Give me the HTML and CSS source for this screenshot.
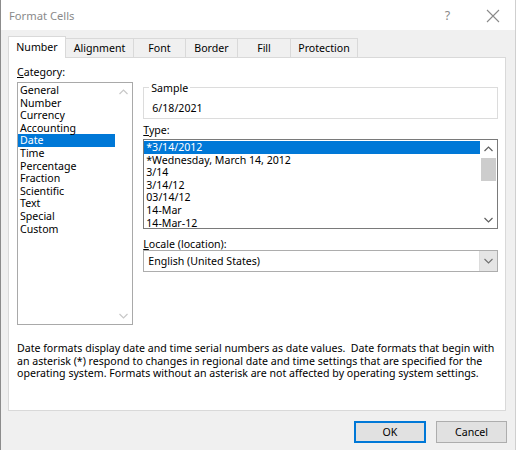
FILE: index.html
```html
<!DOCTYPE html>
<html>
<head>
<meta charset="utf-8">
<link rel="stylesheet" href="styles.css">
</head>
<body>
<div class="window">
  <div class="titlebar">
    <span class="title">Format Cells</span>
    <span class="tb-btn help">?</span>
    <span class="tb-btn close">
      <svg width="14" height="14" viewBox="0 0 14 14"><path d="M1 1L13 13M13 1L1 13" stroke="#8a8a8a" stroke-width="1.1" fill="none"/></svg>
    </span>
  </div>
  <div class="body">
    <div class="tabs">
      <div class="tab active">Number</div>
      <div class="tab">Alignment</div>
      <div class="tab">Font</div>
      <div class="tab">Border</div>
      <div class="tab">Fill</div>
      <div class="tab">Protection</div>
    </div>
    <div class="panel">
      <div class="columns">
        <div class="col-left">
          <div class="label"><u>C</u>ategory:</div>
          <div class="listbox cat">
            <div class="items">
              <div class="item">General</div>
              <div class="item">Number</div>
              <div class="item">Currency</div>
              <div class="item">Accounting</div>
              <div class="item sel">Date</div>
              <div class="item">Time</div>
              <div class="item">Percentage</div>
              <div class="item">Fraction</div>
              <div class="item">Scientific</div>
              <div class="item">Text</div>
              <div class="item">Special</div>
              <div class="item">Custom</div>
            </div>
            <div class="vscroll disabled">
              <svg class="arr" width="9" height="6" viewBox="0 0 9 6"><path d="M0.5 5L4.5 1L8.5 5" stroke="#c8c8c8" stroke-width="1.2" fill="none"/></svg>
              <div class="track"></div>
              <svg class="arr" width="9" height="6" viewBox="0 0 9 6"><path d="M0.5 1L4.5 5L8.5 1" stroke="#c8c8c8" stroke-width="1.2" fill="none"/></svg>
            </div>
          </div>
        </div>
        <div class="col-right">
          <div class="group">
            <div class="legend">Sample</div>
            <div class="sample">6/18/2021</div>
          </div>
          <div class="label type-label"><u>T</u>ype:</div>
          <div class="listbox type">
            <div class="items">
              <div class="item sel">*3/14/2012</div>
              <div class="item">*Wednesday, March 14, 2012</div>
              <div class="item">3/14</div>
              <div class="item">3/14/12</div>
              <div class="item">03/14/12</div>
              <div class="item">14-Mar</div>
              <div class="item">14-Mar-12</div>
            </div>
            <div class="vscroll">
              <svg class="arr" width="9" height="6" viewBox="0 0 9 6"><path d="M0.5 5L4.5 1L8.5 5" stroke="#606060" stroke-width="1.2" fill="none"/></svg>
              <div class="track"><div class="thumb"></div></div>
              <svg class="arr" width="9" height="6" viewBox="0 0 9 6"><path d="M0.5 1L4.5 5L8.5 1" stroke="#606060" stroke-width="1.2" fill="none"/></svg>
            </div>
          </div>
          <div class="label locale-label"><u>L</u>ocale (location):</div>
          <div class="combo">
            <div class="combo-text">English (United States)</div>
            <div class="combo-btn">
              <svg width="9" height="6" viewBox="0 0 9 6"><path d="M0.5 1L4.5 5L8.5 1" stroke="#707070" stroke-width="1.1" fill="none"/></svg>
            </div>
          </div>
        </div>
      </div>
      <p class="desc">Date formats display date and time serial numbers as date values.&nbsp; Date formats that begin with an asterisk (*) respond to changes in regional date and time settings that are specified for the operating system. Formats without an asterisk are not affected by operating system settings.</p>
    </div>
    <div class="buttons">
      <div class="btn default">OK</div>
      <div class="btn cancel">Cancel</div>
    </div>
  </div>
</div>
</body>
</html>
```

FILE: styles.css
```css
html, body {
  margin: 0;
  padding: 0;
}
body {
  width: 516px;
  height: 450px;
  overflow: hidden;
  font-family: "Noto Sans", "Open Sans", sans-serif;
  font-size: 10.6px;
  color: #000;
  background: #f0f0f0;
}
.window {
  width: 516px;
  height: 450px;
  box-sizing: border-box;
  border-left: 1px solid #8c8c8c;
  border-right: 1px solid #cfcfcf;
  background: #f0f0f0;
}
.titlebar {
  height: 30px;
  background: #fff;
  display: flex;
  align-items: center;
  padding-left: 8px;
}
.title {
  color: #8a8a8a;
  font-size: 11.2px;
  flex: 1;
}
.tb-btn {
  width: 45px;
  display: flex;
  justify-content: center;
  color: #8a8a8a;
  font-size: 12.5px;
}
.close { padding-top: 1px; }
.body {
  padding: 6px 8px 0 7px;
}
.tabs {
  display: flex;
  align-items: flex-end;
  height: 21px;
}
.tab {
  height: 19px;
  box-sizing: border-box;
  border: 1px solid #d9d9d9;
  border-bottom: none;
  border-left: none;
  display: flex;
  align-items: center;
  justify-content: center;
  background: #f0f0f0;
}
.tab:nth-child(2) { width: 68px; }
.tab:nth-child(3) { width: 52px; }
.tab:nth-child(4) { width: 52px; }
.tab:nth-child(5) { width: 53px; }
.tab:nth-child(6) { width: 67px; }
.tab.active {
  width: 58px;
  height: 22px;
  background: #fff;
  border-left: 1px solid #d9d9d9;
  border-right: 1px solid #d9d9d9;
  margin-bottom: -1px;
  position: relative;
  z-index: 1;
  padding-bottom: 2px;
}
.panel {
  background: #fff;
  border: 1px solid #d9d9d9;
  height: 354px;
  box-sizing: border-box;
  margin-right: 1px;
  padding: 7px 7px 0 8px;
}
.columns {
  display: flex;
  gap: 10px;
}
.col-left {
  width: 117px;
}
.col-right {
  width: 357px;
  padding-top: 22px;
}
.label {
  height: 17px;
  line-height: 15px;
}
.listbox {
  display: flex;
  box-sizing: border-box;
  border: 1px solid #a9a9a9;
  background: #fff;
}
.items {
  flex: 1;
  padding-top: 1px;
}
.item {
  height: 12.6px;
  line-height: 12.6px;
  padding-left: 2px;
  white-space: nowrap;
}
.item.sel {
  background: #0078d7;
  color: #fff;
}
.listbox.cat {
  height: 243px;
}
.vscroll {
  width: 17px;
  display: flex;
  flex-direction: column;
  align-items: center;
  padding: 6px 0 5px;
  box-sizing: border-box;
}
.vscroll .track {
  flex: 1;
  width: 100%;
  padding-top: 1px;
  margin-top: 5px;
}
.thumb {
  height: 23px;
  background: #cdcdcd;
  margin: 0 1px;
}
.listbox.type {
  height: 90px;
  border-color: #7a7a7a;
}
.group {
  position: relative;
  border: 1px solid #dcdcdc;
  height: 32px;
  box-sizing: border-box;
}
.legend {
  position: absolute;
  top: -6px;
  left: 5px;
  background: #fff;
  padding: 0 2px;
  line-height: 13px;
}
.sample {
  padding: 13px 0 0 8px;
}
.type-label {
  margin-top: 2px;
  height: 18px;
  line-height: 18px;
}
.locale-label {
  margin-top: 6px;
  height: 15px;
  line-height: 18px;
}
.combo {
  height: 22px;
  box-sizing: border-box;
  border: 1px solid #adadad;
  display: flex;
  background: #fff;
}
.combo-text {
  flex: 1;
  padding-left: 4px;
  line-height: 20px;
}
.combo-btn {
  width: 17px;
  border-left: 1px solid #dcdcdc;
  background: #e5e5e5;
  display: flex;
  align-items: center;
  justify-content: center;
}
.desc {
  margin: 17px 0 0 0;
  width: 485px;
  line-height: 12.7px;
}
.buttons {
  display: flex;
  justify-content: flex-end;
  gap: 10px;
  margin-top: 10px;
}
.btn {
  width: 72px;
  height: 22px;
  box-sizing: border-box;
  border: 1px solid #adadad;
  background: #e1e1e1;
  display: flex;
  align-items: center;
  justify-content: center;
}
.btn.cancel {
  width: 71px;
}
.btn.default {
  border: 2px solid #0078d7;
}
```
